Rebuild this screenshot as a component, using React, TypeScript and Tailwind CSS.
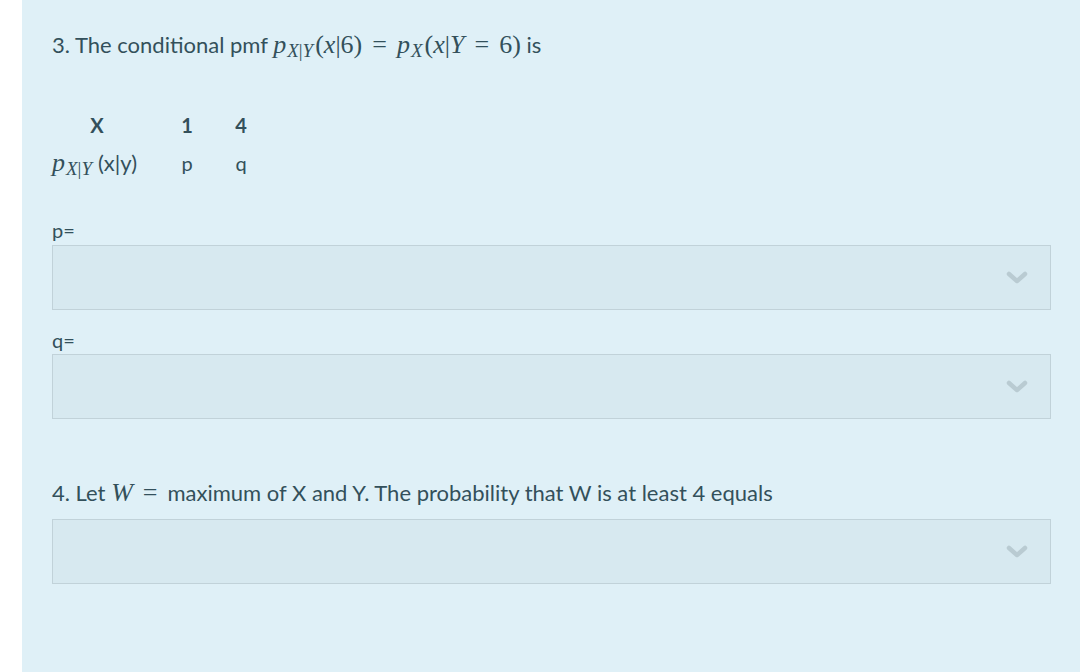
import React from "react";

const sans = { fontFamily: "Lato, 'Noto Sans', sans-serif" } as React.CSSProperties;

function M({ children }: { children: React.ReactNode }) {
  return <span className="font-['Liberation_Serif',serif] text-[26px]">{children}</span>;
}
function I({ children }: { children: React.ReactNode }) {
  return <span className="italic">{children}</span>;
}
function Sub({ children }: { children: React.ReactNode }) {
  return <span className="text-[19px] ml-[1px] mr-[2px]" style={{ verticalAlign: "-4px" }}>{children}</span>;
}
function Eq() {
  return <span className="mx-[10px]">=</span>;
}

function Chevron() {
  return (
    <svg width="22" height="13" viewBox="0 0 22 13" className="shrink-0">
      <path d="M3 3 L11 10 L19 3" fill="none" stroke="#b9cbd2" strokeWidth="4.5" strokeLinecap="round" strokeLinejoin="round" />
    </svg>
  );
}

function SelectBox({ className = "" }: { className?: string }) {
  return (
    <div className={`h-[65px] w-[999px] border border-[#c1d2d9] bg-[#d7e9f0] flex items-center justify-end pr-[22px] ${className}`}>
      <Chevron />
    </div>
  );
}

export default function App() {
  return (
    <div className="w-[1080px] h-[672px] bg-white flex overflow-hidden" style={sans}>
      <div className="w-[22px] shrink-0 bg-white" />
      <div className="flex-1 bg-[#dff0f7] pl-[30px] pt-[30px] text-[#33505b] flex flex-col">
        <div className="h-[30px] leading-[30px] text-[22px] whitespace-nowrap">
          3. The conditional pmf{" "}
          <M>
            <I>p</I>
            <Sub><I>X</I>|<I>Y</I></Sub>(<I>x</I>|6)<Eq /><I>p</I>
            <Sub><I>X</I></Sub>(<I>x</I>|<I>Y</I><Eq />6)
          </M>{" "}
          is
        </div>

        <div className="mt-[46px] flex flex-col">
          <div className="flex h-[38px] items-center text-[20px] font-bold">
            <div className="w-[90px] text-center">X</div>
            <div className="ml-[30px] w-[30px] text-center">1</div>
            <div className="ml-[24px] w-[30px] text-center">4</div>
          </div>
          <div className="flex h-[38px] items-center text-[20px]">
            <div className="w-[90px] whitespace-nowrap">
              <span className="font-['Liberation_Serif',serif] text-[26px]">
                <I>p</I>
                <Sub><I>X</I>|<I>Y</I></Sub>
              </span>
              <span className="ml-[4px] text-[22px]">(x|y)</span>
            </div>
            <div className="ml-[30px] w-[30px] text-center">p</div>
            <div className="ml-[24px] w-[30px] text-center">q</div>
          </div>
        </div>

        <div className="mt-[36px] h-[24px] leading-[24px] text-[20px]">p=</div>
        <SelectBox className="mt-[3px]" />

        <div className="mt-[18px] h-[24px] leading-[24px] text-[20px]">q=</div>
        <SelectBox className="mt-[2px]" />

        <div className="mt-[59px] h-[30px] leading-[30px] text-[22px] whitespace-nowrap">
          4. Let <M><I>W</I><Eq /></M>maximum of X and Y. The probability that W is at least 4 equals
        </div>
        <SelectBox className="mt-[11px]" />
      </div>
    </div>
  );
}
